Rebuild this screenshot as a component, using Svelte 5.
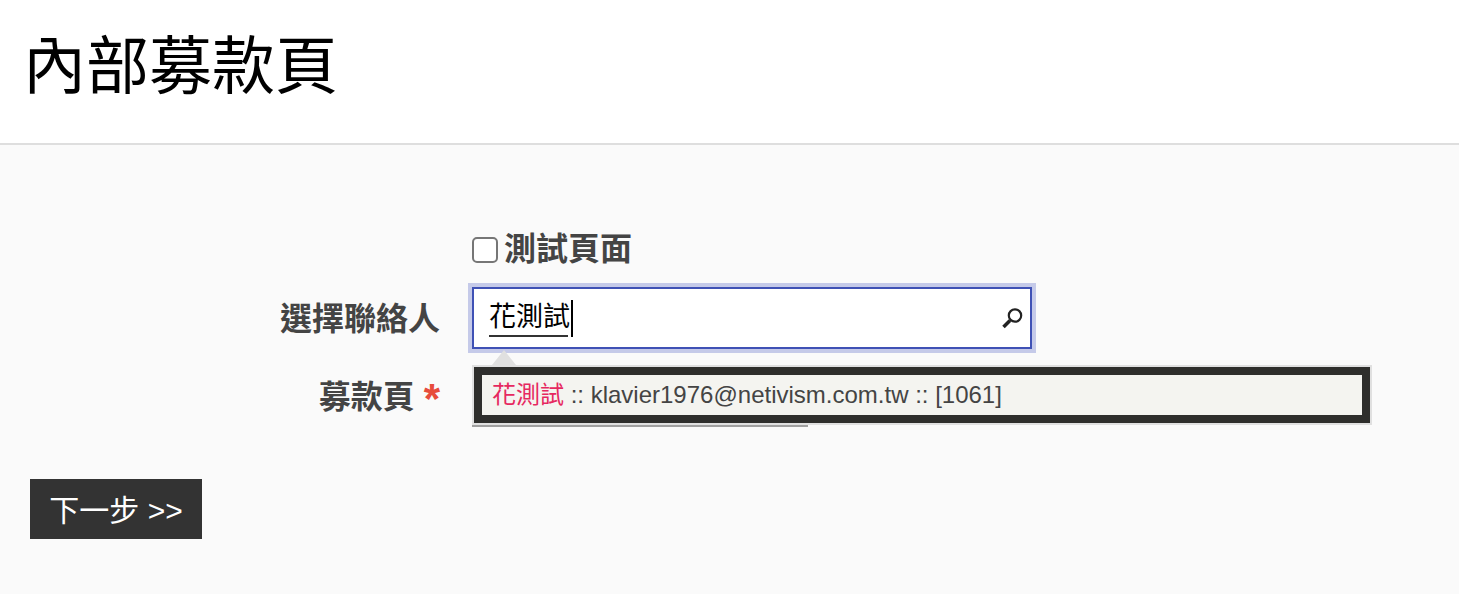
<script>
    let contactName = '花測試';
    let result = { email: 'klavier1976@netivism.com.tw', id: 1061 };
</script>

<style>
    :global(body) {
        background: #fafafa;
        font-family: "Liberation Sans", "Noto Sans CJK TC", sans-serif;
    }
    .header {
        height: 143px;
        background: #fff;
        border-bottom: 2px solid #dedede;
        padding-left: 23px;
        box-sizing: content-box;
    }
    h1 {
        margin: 0;
        padding-top: 21px;
        font-size: 63px;
        line-height: 90px;
        font-weight: 400;
        color: #000;
    }
    .form {
        display: grid;
        grid-template-columns: 440px 900px;
        column-gap: 32px;
        padding-top: 84px;
        color: #444;
    }
    .label {
        font-size: 32px;
        font-weight: 700;
        text-align: right;
        align-self: center;
    }
    .required {
        color: #e74c3c;
        font-size: 42px;
        line-height: 0;
        vertical-align: -5px;
    }
    .checkbox {
        grid-column: 2;
        display: flex;
        align-items: center;
        gap: 6px;
        height: 40px;
        font-size: 32px;
        font-weight: 700;
    }
    .checkbox-text {
        margin-bottom: 6px;
    }
    .box {
        width: 26px;
        height: 26px;
        margin-top: 2px;
        box-sizing: border-box;
        border: 2px solid #767676;
        border-radius: 5px;
        background: #fff;
    }
    .search {
        width: 560px;
        height: 62px;
        box-sizing: border-box;
        margin-top: 18px;
        display: flex;
        align-items: center;
        justify-content: space-between;
        padding: 0 6px 0 15px;
        background: #fff;
        border: 2px solid #3f51b5;
        box-shadow: 0 0 0 4px #c5cae9;
        font-size: 27px;
        color: #000;
    }
    .typed {
        display: inline-block;
        height: 37px;
        line-height: 35px;
        border-right: 2px solid #000;
        padding-right: 1px;
        background: linear-gradient(#333, #333) left bottom / calc(100% - 3px) 2px no-repeat;
    }
    .row-search {
        margin-top: 18px;
        padding-bottom: 4px;
    }
    .row-label {
        margin-top: 21px;
        padding-bottom: 10px;
    }
    .select {
        position: relative;
        width: 336px;
        height: 55px;
        margin-top: 21px;
        box-sizing: content-box;
        border-bottom: 2px solid #a0a0a0;
    }
    .popup {
        position: absolute;
        left: 0;
        top: -5px;
        width: 900px;
        height: 60px;
        box-sizing: border-box;
        border: 2px solid #e0e0e0;
        background: #f4f4f0;
        z-index: 2;
    }
    .popup::before {
        content: "";
        position: absolute;
        left: 18px;
        top: -17px;
        border-left: 12px solid transparent;
        border-right: 12px solid transparent;
        border-bottom: 15px solid #e0e0e0;
    }
    .item {
        height: 100%;
        box-sizing: border-box;
        border: 8px solid #2e2e2c;
        padding-left: 10px;
        font-size: 24px;
        line-height: 40px;
        color: #444;
        white-space: nowrap;
    }
    .match {
        color: #e6285f;
    }
    button {
        display: block;
        width: 172px;
        height: 60px;
        margin: 52px 0 0 30px;
        padding: 0 0 2px;
        border: none;
        background: #333;
        color: #fff;
        font-family: inherit;
        font-size: 30px;
    }
</style>

<div class="header">
    <h1>內部募款頁</h1>
</div>

<div class="form">
    <div class="checkbox">
        <span class="box"></span>
        <span class="checkbox-text">測試頁面</span>
    </div>

    <div class="label row-search">選擇聯絡人</div>
    <div class="search">
        <span class="typed">{contactName}</span>
        <svg width="24" height="24" viewBox="0 0 24 24" fill="none" stroke="#222">
            <circle cx="15" cy="9.5" r="6.2" stroke-width="2.2" />
            <path d="M10 14.5 L3.5 21" stroke-width="3.6" />
        </svg>
    </div>

    <div class="label row-label">募款頁 <span class="required">*</span></div>
    <div class="select">
        <div class="popup">
            <div class="item">
                <span class="match">{contactName}</span> :: {result.email} :: [{result.id}]
            </div>
        </div>
    </div>
</div>

<button>下一步 &gt;&gt;</button>
